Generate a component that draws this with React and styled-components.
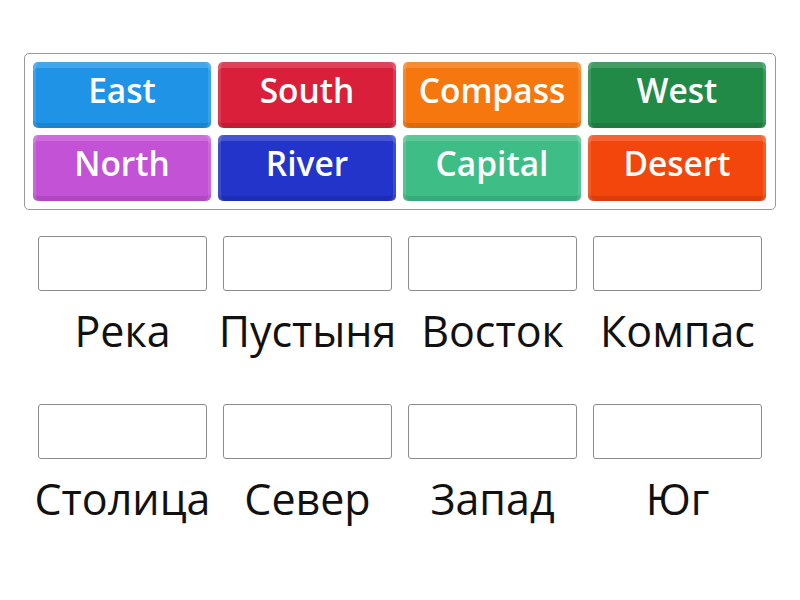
import React from 'react';
import styled, { createGlobalStyle } from 'styled-components';

const GlobalStyle = createGlobalStyle`
    html, body {
        margin:0;
        padding:0;
        background:#fff;
    }
    body {
        font-family:"Open Sans", "Liberation Sans", sans-serif;
    }
`;

const tiles = [
    { text: 'East', color: '#1f94e6' },
    { text: 'South', color: '#d91f3a' },
    { text: 'Compass', color: '#f5770d' },
    { text: 'West', color: '#218a47' },
    { text: 'North', color: '#c452d6' },
    { text: 'River', color: '#2234c9' },
    { text: 'Capital', color: '#3fbd87' },
    { text: 'Desert', color: '#f2460c' },
];

const answers = [
    ['Река', 'Пустыня', 'Восток', 'Компас'],
    ['Столица', 'Север', 'Запад', 'Юг'],
];

const Page = styled.div`
    width:800px;
    height:600px;
    box-sizing:border-box;
    padding:53px 24px 0 24px;
`;

const Bank = styled.div`
    display:grid;
    grid-template-columns:repeat(4, 178px);
    grid-auto-rows:66px;
    gap:7px;
    padding:8px;
    border:1px solid #9a9a9a;
    border-radius:5px;
    width:752px;
    box-sizing:border-box;
`;

const Tile = styled.div`
    display:flex;
    align-items:center;
    justify-content:center;
    background:${p => p.$color};
    border-radius:5px;
    color:#fff;
    font-size:33.5px;
    font-weight:600;
    box-shadow:
        inset 0 6px 0 rgba(255,255,255,0.16),
        inset 3px 0 0 rgba(255,255,255,0.12),
        inset -3px 0 0 rgba(255,255,255,0.12),
        inset 0 -5px 0 rgba(0,0,0,0.1);
    padding-bottom:10px;
    box-sizing:border-box;
`;

const Answers = styled.div`
    display:grid;
    grid-template-columns:repeat(4, 169px);
    column-gap:16px;
    row-gap:0;
    padding:26px 0 0 14px;
`;

const Slot = styled.div`
    display:flex;
    flex-direction:column;
    align-items:center;
    height:168px;
`;

const Box = styled.div`
    width:169px;
    height:55px;
    box-sizing:border-box;
    border:1px solid #8c8c8c;
    border-radius:3px;
`;

const Label = styled.div`
    margin-top:12px;
    font-size:43px;
    line-height:56px;
    color:#111;
    white-space:nowrap;
`;

export default function App() {
    return (
        <Page>
            <GlobalStyle />
            <Bank>
                {tiles.map(t => (
                    <Tile key={t.text} $color={t.color}>{t.text}</Tile>
                ))}
            </Bank>
            <Answers>
                {answers.flat().map(a => (
                    <Slot key={a}>
                        <Box />
                        <Label>{a}</Label>
                    </Slot>
                ))}
            </Answers>
        </Page>
    );
}
